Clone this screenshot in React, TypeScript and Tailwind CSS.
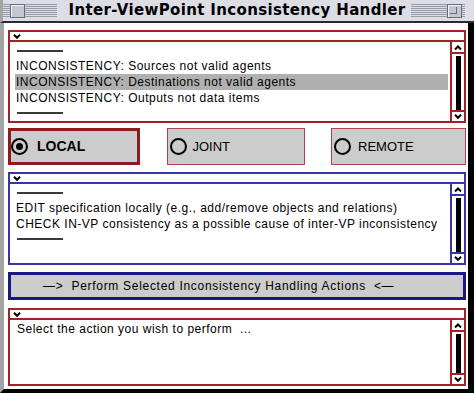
import type { ReactNode } from 'react';
import { clsx } from 'clsx';

type Tone = 'red' | 'blue';

const borderOf: Record<Tone, string> = {
  red: 'border-[#a3222a]',
  blue: 'border-[#3636a6]',
};

function Chevron({ up = false }: { up?: boolean }) {
  return (
    <svg width="8" height="5" viewBox="0 0 8 5" className="block">
      <polyline
        points={up ? '1,4.5 4,1.5 7,4.5' : '1,0.8 4,3.8 7,0.8'}
        fill="none"
        stroke="#000"
        strokeWidth="2"
      />
    </svg>
  );
}

function ScrollBar({ tone }: { tone: Tone }) {
  const b = borderOf[tone];
  return (
    <div className={clsx('flex w-[14px] flex-col border-l-2', b)}>
      <div className={clsx('flex h-[12px] items-center justify-center border-b-2', b)}>
        <Chevron up />
      </div>
      <div className="flex flex-1 justify-center pt-[2px]">
        <div className="w-[5px] bg-black" />
      </div>
      <div className={clsx('flex h-[11px] items-center justify-center border-t-2', b)}>
        <Chevron />
      </div>
    </div>
  );
}

function Panel({ tone, className, children }: { tone: Tone; className: string; children: ReactNode }) {
  const b = borderOf[tone];
  return (
    <div className={clsx('flex flex-col border-2 bg-white', b, className)}>
      <div className="flex h-[8px] items-center pl-[3px]">
        <Chevron />
      </div>
      <div className={clsx('flex min-h-0 flex-1 border-t-2', b)}>
        <div className="min-w-0 flex-1 pl-[5px] pr-[2px]">{children}</div>
        <ScrollBar tone={tone} />
      </div>
    </div>
  );
}

function Rule() {
  return <div className="ml-[2px] h-[2px] w-[46px] bg-[#3a3a3a]" />;
}

function Row({ text, selected = false }: { text: string; selected?: boolean }) {
  return (
    <div className={clsx('h-[16px] whitespace-nowrap pl-[1px] leading-[16px]', selected && 'bg-[#b0b0b0]')}>
      {text}
    </div>
  );
}

function Radio({ label, checked, width, gap, bold }: { label: string; checked?: boolean; width: string; gap: string; bold?: boolean }) {
  return (
    <div
      className={clsx(
        'flex h-[37px] items-center bg-[#cccccc]',
        width,
        checked ? 'border-[3px] border-[#8e1a1f] pl-[0px]' : 'border-[1.5px] border-[#b3404a] pl-[2px]',
      )}
    >
      <div className="flex h-[17px] w-[17px] items-center justify-center rounded-full border-[2.5px] border-black">
        {checked && <div className="h-[7px] w-[7px] rounded-full bg-black" />}
      </div>
      <span className={clsx(gap, 'tracking-normal', bold ? 'text-[14px] font-bold' : 'text-[13px]')}>{label}</span>
    </div>
  );
}

function Stripes({ width }: { width: string }) {
  return (
    <div
      className={clsx(
        'h-[13px] bg-[repeating-linear-gradient(to_bottom,#9a9aaa_0px,#9a9aaa_1px,transparent_1px,transparent_2px)]',
        width,
      )}
    />
  );
}

export default function App() {
  return (
    <div className="flex h-[393px] w-[474px] flex-col overflow-hidden bg-white font-['Liberation_Sans',Arial,sans-serif] text-[12px] tracking-[0.5px] text-black">
      {/* title bar */}
      <div className="flex h-[23px] shrink-0 items-center border-b-2 border-l-[3px] border-b-[#2a2a34] border-l-[#a4a4a4] bg-[#dddde6] pr-[9px]">
        <Stripes width="w-[7px]" />
        <div className="h-[14px] w-[15px] border border-[#6a6a7a] bg-[#c6c6d2] shadow-[inset_1px_1px_0_#f4f4fa]" />
        <Stripes width="w-[32px]" />
        <div className="flex-1 whitespace-nowrap pl-[6px] text-center font-['DejaVu_Sans',sans-serif] text-[15px] font-bold leading-none tracking-[0.35px]">
          Inter-ViewPoint Inconsistency Handler
        </div>
        <Stripes width="w-[36px]" />
        <div className="relative h-[14px] w-[15px] border border-[#6a6a7a] bg-[#c6c6d2] shadow-[inset_1px_1px_0_#f4f4fa]">
          <div className="absolute left-[2px] top-[2px] h-[7px] w-[7px] border-b border-r border-[#6a6a7a]" />
        </div>
        <Stripes width="w-[3px]" />
      </div>

      {/* window body */}
      <div className="flex min-h-0 flex-1 flex-col border-b-4 border-l-4 border-r-[6px] border-b-black border-l-[#a4a4a4] border-r-black pl-[4px] pr-[2px] pt-[7px]">
        <Panel tone="red" className="h-[93px]">
          <div className="pt-[8px]">
            <Rule />
            <div className="mt-[6px]">
              <Row text="INCONSISTENCY: Sources not valid agents" />
              <Row text="INCONSISTENCY: Destinations not valid agents" selected />
              <Row text="INCONSISTENCY: Outputs not data items" />
            </div>
            <div className="mt-[6px]">
              <Rule />
            </div>
          </div>
        </Panel>

        <div className="mt-[5px] flex justify-between">
          <Radio label="LOCAL" checked bold width="w-[132px]" gap="ml-[9px]" />
          <Radio label="JOINT" width="w-[138px]" gap="ml-[6px]" />
          <Radio label="REMOTE" width="w-[135px]" gap="ml-[7px]" />
        </div>

        <Panel tone="blue" className="mt-[7px] h-[93px]">
          <div className="pt-[8px]">
            <Rule />
            <div className="mt-[6px]">
              <Row text="EDIT specification locally (e.g., add/remove objects and relations)" />
              <Row text="CHECK IN-VP consistency as a possible cause of inter-VP inconsistency" />
            </div>
            <div className="mt-[6px]">
              <Rule />
            </div>
          </div>
        </Panel>

        <button
          type="button"
          className="mt-[7px] flex h-[28px] items-center justify-start whitespace-nowrap border-[3px] border-[#18187e] bg-[#cccccc] pl-[32px] text-[12px] tracking-[0.7px]"
        >
          —&gt;&nbsp;&nbsp;Perform Selected Inconsistency Handling Actions&nbsp;&nbsp;&lt;—
        </button>

        <Panel tone="red" className="mt-[8px] h-[78px]">
          <div className="pl-[2px] pt-[1px] leading-[16px]">Select the action you wish to perform&nbsp;&nbsp;...</div>
        </Panel>
      </div>
    </div>
  );
}
